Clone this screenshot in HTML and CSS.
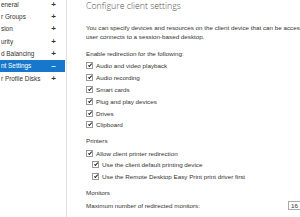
FILE: index.html
```html
<!DOCTYPE html>
<html>
<head>
<meta charset="utf-8">
<link rel="stylesheet" href="styles.css">
</head>
<body>
<div class="window">
  <nav class="nav">
    <div class="nav-item"><span class="nav-label">eneral</span><span class="nav-sign">+</span></div>
    <div class="nav-item"><span class="nav-label">r Groups</span><span class="nav-sign">+</span></div>
    <div class="nav-item"><span class="nav-label">sion</span><span class="nav-sign">+</span></div>
    <div class="nav-item"><span class="nav-label">urity</span><span class="nav-sign">+</span></div>
    <div class="nav-item"><span class="nav-label">d Balancing</span><span class="nav-sign">+</span></div>
    <div class="nav-item selected"><span class="nav-label">nt Settings</span><span class="nav-sign minus">&#8211;</span></div>
    <div class="nav-item"><span class="nav-label">r Profile Disks</span><span class="nav-sign">+</span></div>
  </nav>
  <main class="content">
    <h1 class="title">Configure client settings</h1>
    <p class="intro">You can specify devices and resources on the client device that can be accessed when a<br>user connects to a session-based desktop.</p>
    <div class="label">Enable redirection for the following:</div>
    <div class="check"><span class="box"></span>Audio and video playback</div>
    <div class="check"><span class="box"></span>Audio recording</div>
    <div class="check"><span class="box"></span>Smart cards</div>
    <div class="check"><span class="box"></span>Plug and play devices</div>
    <div class="check"><span class="box"></span>Drives</div>
    <div class="check"><span class="box"></span>Clipboard</div>
    <div class="section">Printers</div>
    <div class="check"><span class="box"></span>Allow client printer redirection</div>
    <div class="check sub"><span class="box"></span>Use the client default printing device</div>
    <div class="check sub"><span class="box"></span>Use the Remote Desktop Easy Print print driver first</div>
    <div class="section monitors">Monitors</div>
    <div class="field"><span>Maximum number of redirected monitors:</span><span class="input">16</span></div>
  </main>
</div>
</body>
</html>
```

FILE: styles.css
```css
html, body {
  margin: 0;
  padding: 0;
  background: #fff;
}
body {
  width: 300px;
  height: 217px;
  overflow: hidden;
  font-family: "Liberation Sans", Arial, sans-serif;
  font-size: 6.25px;
  color: #333;
}
.window {
  display: flex;
  height: 217px;
}
.nav {
  width: 67px;
  flex: none;
  border-right: 1px solid #e3e3e3;
  margin-top: -2px;
  height: 219px;
  box-sizing: border-box;
}
.nav-item {
  height: 12.33px;
  display: flex;
  align-items: center;
  justify-content: space-between;
  padding: 0 9px 0 1px;
  width: 65px;
  box-sizing: border-box;
  white-space: nowrap;
  font-size: 6.4px;
}
.nav-item.selected {
  background: #1777cc;
  color: #fff;
}
.nav-sign {
  font-size: 8px;
  font-weight: bold;
  width: 5px;
  text-align: center;
}
.content {
  flex: 1;
  padding-left: 19px;
  white-space: nowrap;
  overflow: hidden;
}
.title {
  margin: 0;
  font-family: "Open Sans", sans-serif;
  font-weight: 300;
  font-size: 8.8px;
  color: #555;
  line-height: 12px;
  height: 12px;
}
.intro {
  margin: 11px 0 0;
  line-height: 9px;
}
.label {
  margin-top: 7px;
  line-height: 12px;
}
.check {
  display: flex;
  align-items: center;
  height: 11.8px;
}
.check.sub {
  padding-left: 6px;
}
.box {
  width: 5px;
  height: 5px;
  border: 1px solid #999;
  margin-right: 3px;
  position: relative;
  flex: none;
}
.box::after {
  content: "";
  position: absolute;
  left: 1.5px;
  top: 0;
  width: 1.4px;
  height: 3px;
  border: solid #222;
  border-width: 0 1px 1px 0;
  transform: rotate(40deg);
}
.section {
  margin-top: 3.5px;
  line-height: 13px;
}
.section.monitors {
  margin-top: 3.7px;
}
.field {
  display: flex;
  align-items: center;
  justify-content: space-between;
  height: 12px;
}
.input {
  width: 16px;
  height: 9px;
  border: 1px solid #aaa;
  box-sizing: border-box;
  line-height: 7px;
  padding-left: 2px;
  margin-right: -4px;
}
```
